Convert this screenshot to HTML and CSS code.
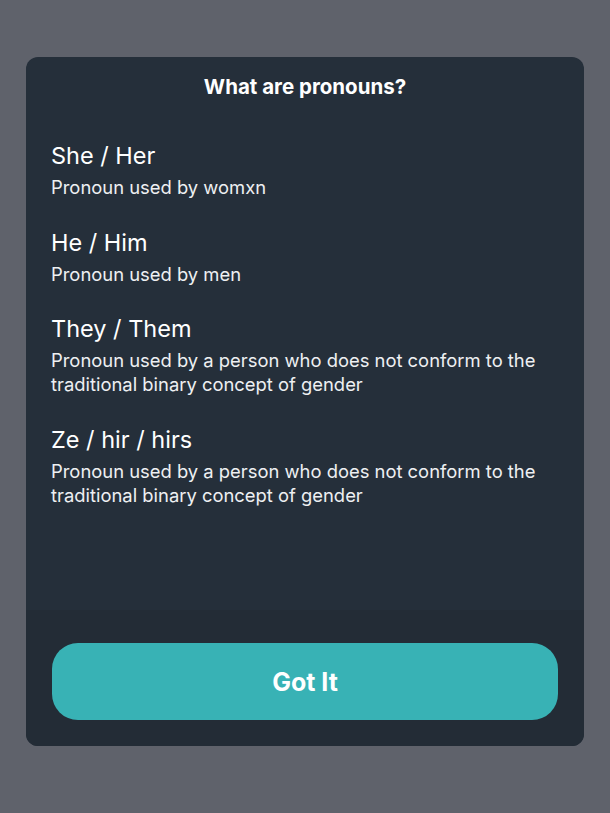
FILE: index.html
```
<!DOCTYPE html>
<html>
<head>
<meta charset="utf-8">
<link rel="stylesheet" href="styles.css">
</head>
<body>
<div class="card">
  <div class="content">
    <h1 class="title">What are pronouns?</h1>
    <div class="list">
      <div class="item">
        <div class="name">She / Her</div>
        <div class="desc">Pronoun used by womxn</div>
      </div>
      <div class="item">
        <div class="name">He / Him</div>
        <div class="desc">Pronoun used by men</div>
      </div>
      <div class="item">
        <div class="name">They / Them</div>
        <div class="desc">Pronoun used by a person who does not conform to the traditional binary concept of gender</div>
      </div>
      <div class="item">
        <div class="name">Ze / hir / hirs</div>
        <div class="desc">Pronoun used by a person who does not conform to the traditional binary concept of gender</div>
      </div>
    </div>
  </div>
  <div class="footer">
    <button class="btn">Got It</button>
  </div>
</div>
</body>
</html>
```
FILE: styles.css
```
html, body {
  margin: 0;
  padding: 0;
}
body {
  background: #5f626b;
  width: 610px;
  height: 813px;
  font-family: "Inter", "Liberation Sans", sans-serif;
  color: #ffffff;
  padding-top: 57px;
  box-sizing: border-box;
}
.card {
  margin: 0 26px;
  height: 689px;
  background: #252f3a;
  border-radius: 12px;
  display: flex;
  flex-direction: column;
  overflow: hidden;
}
.content {
  flex: 1;
  padding: 0 25px;
}
.title {
  margin: 0;
  padding-top: 18px;
  font-size: 20.5px;
  font-weight: 700;
  text-align: center;
  line-height: 24px;
}
.list {
  margin-top: 42px;
  display: flex;
  flex-direction: column;
  gap: 28.5px;
}
.name {
  font-size: 23.5px;
  line-height: 30px;
}
.desc {
  font-size: 18.4px;
  line-height: 24px;
  color: #eef0f2;
  margin-top: 4px;
}
.footer {
  background: #232c36;
  height: 136px;
  padding: 33px 26px 0 26px;
  box-sizing: border-box;
}
.btn {
  display: block;
  width: 100%;
  height: 77px;
  border: none;
  border-radius: 26px;
  background: #38b2b5;
  color: #ffffff;
  font-family: "Inter", "Liberation Sans", sans-serif;
  font-size: 25px;
  font-weight: 700;
  padding: 0;
}
```
